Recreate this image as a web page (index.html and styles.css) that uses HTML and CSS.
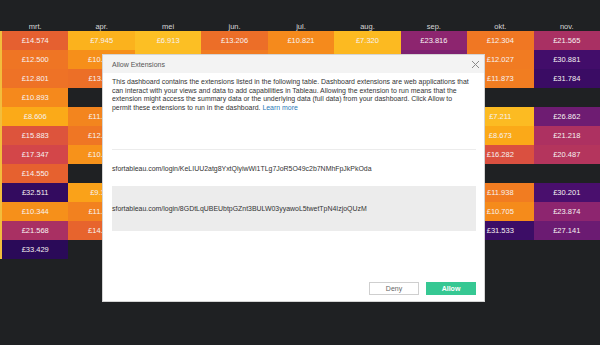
FILE: index.html
```html
<!DOCTYPE html>
<html lang="nl">

<head>
  <meta charset="UTF-8">
  <meta name="viewport" content="width=device-width, initial-scale=1.0">
  <title>Dashboard</title>
  <link rel="stylesheet" href="styles.css">
</head>

<body>
  <main class="viz">
    <header class="months">
      <span>mrt.</span><span>apr.</span><span>mei</span><span>jun.</span><span>jul.</span>
      <span>aug.</span><span>sep.</span><span>okt.</span><span>nov.</span>
    </header>
    <section id="grid" class="grid"></section>
  </main>

  <article class="dialog">
    <header class="dialog-head">
      <h2>Allow Extensions</h2>
      <svg class="dialog-close" width="9" height="9" viewBox="0 0 9 9">
        <path d="M1 1L8 8M8 1L1 8" stroke="#8a8a8a" stroke-width="1" fill="none" />
      </svg>
    </header>
    <div class="dialog-body">
      <p class="dialog-text">This dashboard contains the extensions listed in the following table. Dashboard extensions are web applications that<br>can interact with your views and data to add capabilities in Tableau. Allowing the extension to run means that the<br>extension might access the summary data or the underlying data (full data) from your dashboard. Click Allow to<br>permit these extensions to run in the dashboard. <a href="#">Learn more</a></p>
      <ul class="ext-list">
        <li>sfortableau.com/login/KeLIUU2atg8YxtQlyiwWi1TLg7JoR5O49c2b7NMhFpJkPkOda</li>
        <li class="alt">sfortableau.com/login/8GDtLqUBEUbtpGZnt3BULW03yyawoL5twetTpN4IzjoQUzM</li>
      </ul>
    </div>
    <footer class="dialog-foot">
      <button class="btn btn-deny">Deny</button>
      <button class="btn btn-allow">Allow</button>
    </footer>
  </article>

  <script>
    const d = document,
      $grid = d.getElementById("grid"),
      $fragment = d.createDocumentFragment();

    // rows: mrt .. nov, null = no sales that month
    const DATA = [
      [14574, 7945, 6913, 13206, 10821, 7320, 23816, 12304, 21565],
      [12500, 10412, 7105, 12050, 10630, 7560, 25310, 12027, 30881],
      [12801, 13112, 9820, 12210, 11400, 8900, 22100, 11873, 31784],
      [10893, null, 9100, 11020, 12650, 8120, 24500, null, null],
      [8606, 11230, 8420, 13500, 10100, 7900, 26010, 7211, 26862],
      [15883, 12420, 9350, 12100, 11830, 8600, 22800, 8673, 21218],
      [17347, 10210, 8800, 14100, 12300, 9400, 25100, 16282, 20487],
      [14550, null, 7700, 11500, 10900, 8200, 23300, null, null],
      [32511, 9120, 8000, 12900, 11100, 7800, 24700, 11938, 30201],
      [10344, 11540, 9200, 13300, 10400, 8300, 23100, 10705, 23874],
      [21568, 14210, 9700, 12600, 11700, 7600, 26400, 31533, 27141],
      [33429, null, 8100, 11200, 10500, 8400, 22600, null, null]
    ];

    const STOPS = [
      [6900, [252, 191, 36]],
      [8600, [251, 170, 24]],
      [10500, [246, 142, 26]],
      [12500, [239, 117, 36]],
      [14500, [230, 97, 47]],
      [17300, [211, 70, 73]],
      [21300, [172, 49, 98]],
      [24000, [139, 36, 112]],
      [27000, [109, 28, 114]],
      [30500, [70, 14, 109]],
      [33500, [41, 10, 88]]
    ];

    function colorFor(v) {
      for (let i = 1; i < STOPS.length; i++) {
        if (v <= STOPS[i][0]) {
          let [a, ca] = STOPS[i - 1], [b, cb] = STOPS[i];
          let t = Math.max(0, (v - a) / (b - a));
          let c = ca.map((x, k) => Math.round(x + (cb[k] - x) * t));
          return `rgb(${c.join(",")})`;
        }
      }
      return "rgb(41,10,88)";
    }

    function money(v) {
      return "£" + v.toString().replace(/\B(?=(\d{3})+(?!\d))/g, ".");
    }

    DATA.forEach((row, r) => {
      row.forEach((v, c) => {
        let $cell = d.createElement("div");
        $cell.className = "cell";
        if (v !== null) {
          // labels under the dialog are never seen, skip them
          let covered = r > 0 && c > 1 && c < 7;
          if (!covered) $cell.textContent = money(v);
          $cell.style.backgroundColor = colorFor(v);
        }
        $fragment.appendChild($cell);
      });
    });
    $grid.appendChild($fragment);
  </script>
</body>

</html>
```

FILE: styles.css
```css
html {
  box-sizing: border-box;
  font-family: 'Liberation Sans', Arial, sans-serif;
  font-size: 16px;
}

*,
*:after,
*:before {
  box-sizing: inherit;
}

body {
  margin: 0;
  width: 600px;
  height: 345px;
  overflow: hidden;
  background-color: #1f2123;
}

.viz {
  padding-left: 2px;
}

.months {
  display: grid;
  grid-template-columns: repeat(9, 1fr);
  height: 31px;
  align-items: end;
  font-size: 7.5px;
  color: #d6d6d6;
  text-align: center;
}

.grid {
  display: grid;
  grid-template-columns: repeat(9, 1fr);
  grid-auto-rows: 19px;
  box-shadow: -2px 0 0 #f2bd3c;
}

.cell {
  display: flex;
  align-items: center;
  justify-content: center;
  font-size: 7.5px;
  color: #f6f1f1;
}

.dialog {
  position: absolute;
  left: 102px;
  top: 54px;
  width: 383px;
  height: 248px;
  display: flex;
  flex-direction: column;
  background-color: #fff;
  border: 1px solid #d4d4d4;
  color: #333;
}

.dialog-head {
  display: flex;
  align-items: center;
  justify-content: space-between;
  height: 18px;
  padding: 0 4px 0 9px;
  background-color: #f3f3f3;
}

.dialog-head h2 {
  margin: 0;
  font-size: 7px;
  font-weight: normal;
  color: #555;
}

.dialog-body {
  flex: 1;
  padding: 5px 8px 0 9px;
}

.dialog-text {
  margin: 0;
  font-size: 6.95px;
  line-height: 8.5px;
  color: #333;
  white-space: nowrap;
}

.dialog-text a {
  color: #2a7ab8;
  text-decoration: none;
}

.ext-list {
  list-style: none;
  margin: 37px 0 0;
  padding: 0;
  border-top: 1px solid #ececec;
  font-size: 6.95px;
  color: #333;
}

.ext-list li {
  display: flex;
  align-items: center;
  height: 36px;
}

.ext-list .alt {
  height: 45px;
  background-color: #ececec;
}

.dialog-foot {
  display: flex;
  justify-content: flex-end;
  gap: 7px;
  padding: 0 8px 6px;
}

.btn {
  width: 50px;
  height: 13px;
  padding: 0;
  font-family: inherit;
  font-size: 7px;
  border: 1px solid #cfcfcf;
  background-color: #fff;
  color: #666;
}

.btn-allow {
  border-color: #36c893;
  background-color: #36c893;
  color: #fff;
  font-weight: bold;
}
```
